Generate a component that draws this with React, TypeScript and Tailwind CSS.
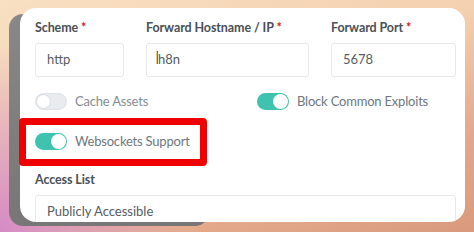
function Toggle({ on }: { on: boolean }) {
  return (
    <span
      className={
        on
          ? "relative inline-block shrink-0 w-[32px] h-[17px] rounded-full bg-[#3fc3ae]"
          : "relative inline-block shrink-0 w-[32px] h-[17px] rounded-full bg-[#e9ecef] border border-[#dfe3e8]"
      }
    >
      <span
        className={
          on
            ? "absolute top-[1px] right-[1px] w-[15px] h-[15px] rounded-full bg-white"
            : "absolute top-0 left-0 w-[15px] h-[15px] rounded-full bg-white border border-[#d6dadf]"
        }
      />
    </span>
  );
}

function Label({ text }: { text: string }) {
  return (
    <div className="text-[12.5px] font-bold text-[#495057] leading-[16px] h-[16px] mb-[7px] tracking-[-0.1px]">
      {text} <span className="text-[#cd201f]">*</span>
    </div>
  );
}

export default function App() {
  return (
    <div
      className="relative w-[474px] h-[232px] overflow-hidden bg-[linear-gradient(160deg,#f9e0c2_0%,#f3d0b0_45%,#e3a98a_75%,#d99a7c_100%)]"
      style={{ fontFamily: "Lato, 'Noto Sans', sans-serif" }}
    >
      <div className="absolute inset-0 bg-[radial-gradient(circle_at_0%_100%,#d58cc6_0%,rgba(213,140,198,0)_35%)]" />
      {/* window behind */}
      <div className="absolute left-[9px] top-[14px] w-[200px] h-[212px] rounded-[14px] bg-[linear-gradient(180deg,#8a8886_0%,#787676_100%)]" />

      <div className="relative pl-[20px] pt-[8px]">
        <div className="w-[445px] h-[214px] rounded-[16px] bg-white pl-[15px] pt-[12px] overflow-hidden">
          <div className="grid grid-cols-[89px_163px_125px] gap-x-[22px]">
            <div>
              <Label text="Scheme" />
              <div className="h-[34px] rounded-[3px] border border-[#e5e8ec] flex items-center pl-[11px] text-[13px] text-[#555c63]">
                http
              </div>
            </div>
            <div>
              <Label text="Forward Hostname / IP" />
              <div className="h-[34px] rounded-[3px] border border-[#e5e8ec] flex items-center pl-[11px] text-[13px] text-[#555c63]">
                <span className="relative">
                  <span className="absolute -left-[3px] -top-[1px] text-[17px] leading-[17px] font-light text-[#222]">I</span>
                  h8n
                </span>
              </div>
            </div>
            <div>
              <Label text="Forward Port" />
              <div className="h-[34px] rounded-[3px] border border-[#e5e8ec] flex items-center pl-[11px] text-[13px] text-[#555c63]">
                5678
              </div>
            </div>
          </div>

          <div className="mt-[16px] flex items-center h-[17px]">
            <div className="flex items-center gap-[8px] w-[222px]">
              <Toggle on={false} />
              <span className="text-[13px] tracking-[-0.2px] text-[#868e96]">Cache Assets</span>
            </div>
            <div className="flex items-center gap-[8px]">
              <Toggle on={true} />
              <span className="text-[13px] tracking-[-0.2px] text-[#6e7780]">Block Common Exploits</span>
            </div>
          </div>

          <div className="mt-[23px] flex items-center gap-[8px] h-[17px]">
            <Toggle on={true} />
            <span className="text-[13px] tracking-[-0.2px] text-[#6e7780]">Websockets Support</span>
          </div>

          <div className="mt-[22px] text-[12.5px] font-bold text-[#495057] leading-[16px] tracking-[-0.1px]">Access List</div>
          <div className="mt-[7px] w-[421px] h-[34px] rounded-[3px] border border-[#e5e8ec] flex items-center pl-[11px] text-[13px] text-[#555c63]">
            Publicly Accessible
          </div>
        </div>
      </div>

      {/* annotation box */}
      <div className="absolute left-[19px] top-[118px] w-[188px] h-[48px] rounded-[4px] border-[7px] border-[#f00000]" />
    </div>
  );
}
